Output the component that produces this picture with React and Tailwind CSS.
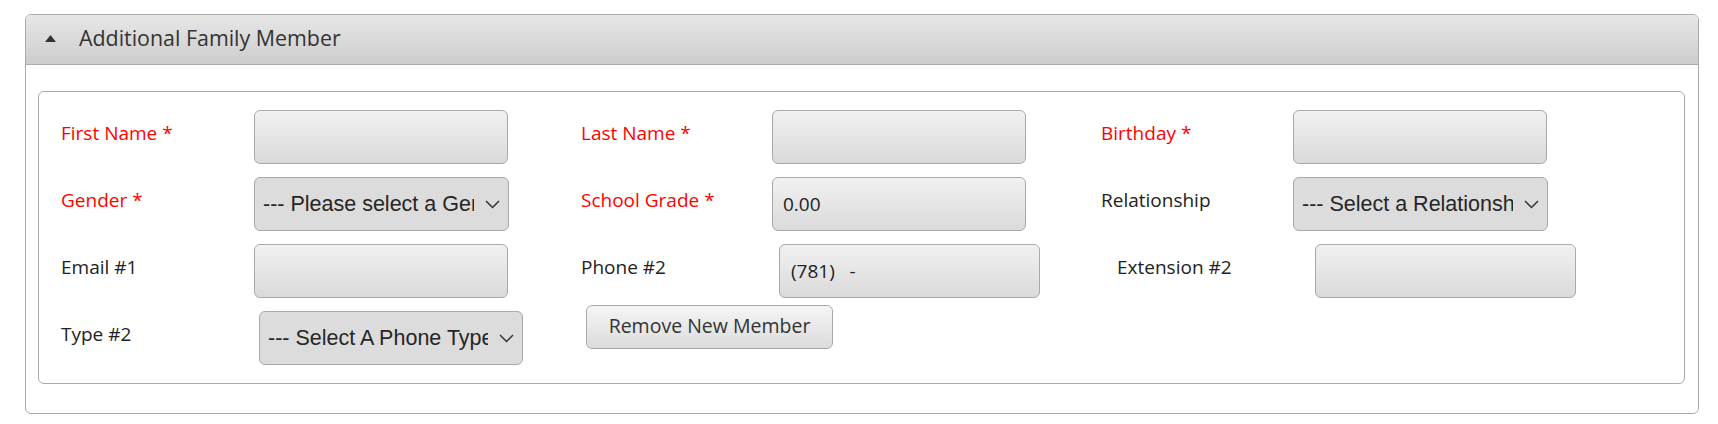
import React from "react";

function Label({ children, req, className }) {
  return (
    <div
      className={
        "shrink-0 pb-[7px] text-[19px] leading-none whitespace-nowrap " +
        (req ? "text-[#ff0000] " : "text-[#222222] ") +
        className
      }
    >
      {children}
    </div>
  );
}

function TextBox({ className, children }) {
  return (
    <div
      className={
        "shrink-0 h-[54px] flex items-center pl-[10px] border border-[#a9a9a9] rounded-[6px] bg-gradient-to-b from-[#f1f1f1] to-[#dadada] text-[19px] text-[#222222] whitespace-pre " +
        className
      }
    >
      {children}
    </div>
  );
}

function Chevron() {
  return (
    <svg width="15" height="9" viewBox="0 0 15 9" className="shrink-0">
      <polyline
        points="1,1 7.5,7.5 14,1"
        fill="none"
        stroke="#333333"
        strokeWidth="1.5"
      />
    </svg>
  );
}

function SelectBox({ className, children }) {
  return (
    <div
      className={
        "shrink-0 h-[54px] flex items-center pl-[8px] pr-[8px] border border-[#a9a9a9] rounded-[6px] bg-[#dcdcdc] font-['Liberation_Sans',Arial,sans-serif] text-[21.5px] text-[#262626] " +
        className
      }
    >
      <div className="flex-1 min-w-0 overflow-hidden whitespace-nowrap">{children}</div>
      <div className="ml-[11px] flex items-center">
        <Chevron />
      </div>
    </div>
  );
}

export default function App() {
  return (
    <div className="min-h-[424px] bg-white pt-[14px] pl-[25px] font-['Open_Sans',sans-serif]">
      <div className="w-[1674px] border border-[#aaaaaa] rounded-[6px]">
        <div className="h-[50px] flex items-center rounded-t-[6px] border-b border-[#aaaaaa] bg-gradient-to-b from-[#e7e7e7] to-[#cdcdcd] pl-[19px]">
          <svg width="11" height="7" viewBox="0 0 11 7" className="mt-[-2px]">
            <path d="M5.5 0 L11 7 L0 7 Z" fill="#333333" />
          </svg>
          <span className="ml-[23px] text-[21.4px] leading-none text-[#333333] pb-[4px]">
            Additional Family Member
          </span>
        </div>
        <div className="pt-[26px] pb-[29px] pl-[12px] pr-[13px]">
          <div className="border border-[#aaaaaa] rounded-[6px] pt-[18px] pb-[18px] pl-[22px] flex flex-col">
            {/* Row 1 */}
            <div className="flex items-center">
              <Label req className="w-[193px]">First Name *</Label>
              <TextBox className="w-[254px]" />
              <div className="w-[73px] shrink-0" />
              <Label req className="w-[191px]">Last Name *</Label>
              <TextBox className="w-[254px]" />
              <div className="w-[75px] shrink-0" />
              <Label req className="w-[192px]">Birthday *</Label>
              <TextBox className="w-[254px]" />
            </div>
            {/* Row 2 */}
            <div className="flex items-center mt-[13px]">
              <Label req className="w-[193px]">Gender *</Label>
              <SelectBox className="w-[255px]">--- Please select a Gender ---</SelectBox>
              <div className="w-[72px] shrink-0" />
              <Label req className="w-[191px]">School Grade *</Label>
              <TextBox className="w-[254px]">0.00</TextBox>
              <div className="w-[75px] shrink-0" />
              <Label className="w-[192px]">Relationship</Label>
              <SelectBox className="w-[255px]">--- Select a Relationship ---</SelectBox>
            </div>
            {/* Row 3 */}
            <div className="flex items-center mt-[13px]">
              <Label className="w-[193px]">Email #1</Label>
              <TextBox className="w-[254px]" />
              <div className="w-[73px] shrink-0" />
              <Label className="w-[198px]">Phone #2</Label>
              <TextBox className="w-[261px] pl-[11px]">{"(781)   -"}</TextBox>
              <div className="w-[77px] shrink-0" />
              <Label className="w-[198px]">Extension #2</Label>
              <TextBox className="w-[261px]" />
            </div>
            {/* Row 4 */}
            <div className="flex items-start mt-[7px]">
              <div className="w-[198px] shrink-0 h-[60px] flex items-center pt-[6px]">
                <Label className="">Type #2</Label>
              </div>
              <SelectBox className="w-[264px] mt-[6px]">--- Select A Phone Type ---</SelectBox>
              <div className="w-[63px] shrink-0" />
              <button className="shrink-0 w-[247px] h-[44px] border border-[#a9a9a9] rounded-[6px] bg-gradient-to-b from-[#f5f5f5] to-[#dcdcdc] text-[19.5px] text-[#333333] flex items-center justify-center pb-[2px]">
                Remove New Member
              </button>
            </div>
          </div>
        </div>
      </div>
    </div>
  );
}
